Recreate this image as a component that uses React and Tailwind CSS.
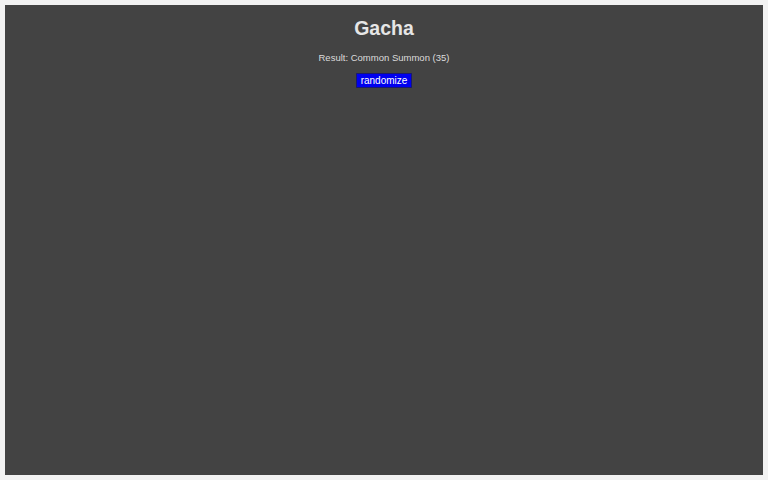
import React, { useState } from "react";

const RESULTS = ["Common Summon", "Rare Summon", "Epic Summon", "Legendary Summon"];

export default function App() {
  const [result, setResult] = useState({ name: "Common Summon", roll: 35 });

  const randomize = () => {
    const roll = Math.floor(Math.random() * 100) + 1;
    const name = roll > 97 ? RESULTS[3] : roll > 85 ? RESULTS[2] : roll > 60 ? RESULTS[1] : RESULTS[0];
    setResult({ name, roll });
  };

  return (
    <div className="w-[768px] h-[480px] bg-[#f2f2f2] p-[5px]" style={{ fontFamily: '"Liberation Sans", Arial, sans-serif' }}>
      <div className="h-[470px] bg-[#434343] flex flex-col items-center text-[#e6e6e6]">
        <h1 className="mt-[11px] text-[19.5px] leading-[24px] font-bold">Gacha</h1>
        <p className="mt-[12px] text-[9.5px] leading-[12px] text-[#dcdcdc]">
          Result: {result.name} ({result.roll})
        </p>
        <button
          onClick={randomize}
          className="mt-[9px] h-[15px] px-[4px] bg-[#0000ee] border border-[#1a1a6e] text-white text-[10px] leading-[12px]"
        >
          randomize
        </button>
      </div>
    </div>
  );
}
